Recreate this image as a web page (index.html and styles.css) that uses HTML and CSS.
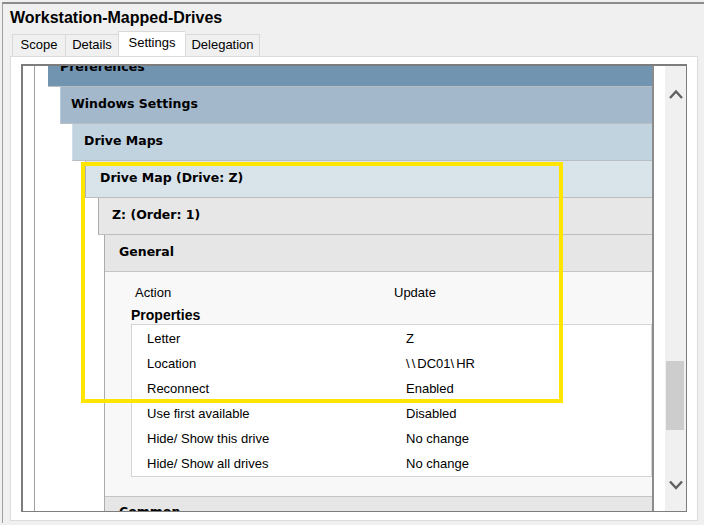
FILE: index.html
```html
<!DOCTYPE html>
<html lang="en">
<head>
   <meta charset="utf-8">
   <title>Workstation-Mapped-Drives</title>
   <link rel="stylesheet" href="styles.css">
</head>
<body>
   <div class="window">
      <div class="title">Workstation-Mapped-Drives</div>
      <div class="tabs">
         <div class="tab w-scope">Scope</div>
         <div class="tab w-details">Details</div>
         <div class="tab active w-settings">Settings</div>
         <div class="tab last w-deleg">Delegation</div>
      </div>
      <div class="panel">
         <div class="frame">
            <div class="view">
               <div class="report">
                  <div class="sec l1">
                     <div class="head">Preferences</div>
                     <div class="body">
                        <div class="sec l2">
                           <div class="head">Windows Settings</div>
                           <div class="body">
                              <div class="sec l3">
                                 <div class="head">Drive Maps</div>
                                 <div class="body">
                                    <div class="sec l4">
                                       <div class="head">Drive Map (Drive: Z)</div>
                                       <div class="body">
                                          <div class="sec l5">
                                             <div class="head">Z: (Order: 1)</div>
                                             <div class="body">
                                                <div class="sec l6">
                                                   <div class="head">General</div>
                                                   <div class="body">
                                                      <div class="action">
                                                         <span>Action</span><span>Update</span>
                                                      </div>
                                                      <div class="props-title">Properties</div>
                                                      <div class="props">
                                                         <div class="row"><span>Letter</span><span>Z</span></div>
                                                         <div class="row"><span>Location</span><span><span class="bs">\</span><span class="bs">\</span>DC01<span class="bs">\</span>HR</span></div>
                                                         <div class="row"><span>Reconnect</span><span>Enabled</span></div>
                                                         <div class="row"><span>Use first available</span><span>Disabled</span></div>
                                                         <div class="row"><span>Hide/ Show this drive</span><span>No change</span></div>
                                                         <div class="row"><span>Hide/ Show all drives</span><span>No change</span></div>
                                                      </div>
                                                   </div>
                                                </div>
                                                <div class="sec l6 common">
                                                   <div class="head">Common</div>
                                                   <div class="body"></div>
                                                </div>
                                             </div>
                                          </div>
                                       </div>
                                    </div>
                                 </div>
                              </div>
                           </div>
                        </div>
                     </div>
                  </div>
               </div>
            </div>
            <div class="scrollbar">
               <div class="sb-btn up">
                  <svg width="16" height="12" viewBox="0 0 16 12"><polyline points="2,10 8,3.5 14,10" fill="none" stroke="#606060" stroke-width="2.4"/></svg>
               </div>
               <div class="sb-track"><div class="sb-thumb"></div></div>
               <div class="sb-btn down">
                  <svg width="16" height="12" viewBox="0 0 16 12"><polyline points="2,2.5 8,9 14,2.5" fill="none" stroke="#606060" stroke-width="2.4"/></svg>
               </div>
            </div>
         </div>
      </div>
   </div>
   <div class="mark"></div>
</body>
</html>
```

FILE: styles.css
```css
body {
   margin:0;
   background:#f0f0f0;
   font-family:"Liberation Sans", Arial, sans-serif;
   font-size:13px;
   color:#000;
}
.window {
   margin:2px 0 0 2px;
   border-top:2px solid #8c8c8c;
   border-left:1px solid #a0a0a0;
   height:519px;
}
.title {
   height:27px;
   line-height:27px;
   padding-left:7px;
   font-size:16px;
   font-weight:bold;
}

/* tab strip */
.tabs {
   display:flex;
   align-items:flex-end;
   height:25px;
   margin-left:9px;
}
.tab {
   box-sizing:border-box;
   height:22px;
   line-height:20px;
   border:1px solid #d9d9d9;
   border-bottom:0;
   border-right:0;
   text-align:center;
   background:#f0f0f0;
}
.tab.last { border-right:1px solid #d9d9d9; }
.tab.active {
   height:25px;
   line-height:22px;
   background:#fff;
}
.w-scope { width:53px; }
.w-details { width:53px; }
.w-settings { width:67px; }
.w-deleg { width:75px; }

.panel {
   box-sizing:border-box;
   margin-left:7px;
   width:688px;
   height:465px;
   border:1px solid #dcdcdc;
   background:#fff;
   padding:7px 0 0 10px;
}
.frame {
   display:flex;
   box-sizing:border-box;
   width:666px;
   height:448px;
   border-style:solid;
   border-color:#7d7d7d;
   border-width:2px 1px 1px 2px;
}
.view {
   flex:1;
   overflow:hidden;
   background:#fff;
   padding:0 11px;
}
.report {
   margin-top:-16px;
   border-left:1px solid #a0a0a0;
   border-right:2px solid #8c8c8c;
   padding-left:13px;
}

/* nested report sections */
.head {
   height:36px;
   line-height:34px;
   border-bottom:1px solid #b9bec2;
   font-family:"DejaVu Sans", sans-serif;
   font-size:12.5px;
   font-weight:bold;
   white-space:nowrap;
}
.l1 > .head { background:#7194b0; padding-left:12px; }
.l1 > .body { padding-left:12px; }
.l2 > .head { background:#a3b8cb; padding-left:10px; border-left:1px solid #b9c9d7; }
.l2 > .body { padding-left:12px; }
.l3 > .head { background:#c1d3df; padding-left:11px; border-left:1px solid #d2dee7; }
.l3 > .body { padding-left:13px; }
.l4 > .head { background:#d8e3ea; padding-left:14px; border-left:1px solid #a9b0b5; border-bottom-color:#bdbdbd; }
.l4 > .body { padding-left:13px; }
.l5 > .head { background:#e7e7e7; padding-left:13px; border-left:1px solid #ababab; border-bottom-color:#bdbdbd; }
.l5 > .body { padding-left:6px; }
.l6 {
   border-left:1px solid #ababab;
   background:#f8f8f8;
}
.l6 > .head { background:#e6e6e6; padding-left:14px; border-bottom-color:#c4c4c4; }
.l6 > .body { padding:8px 0 19px 0; }
.common > .head {
   border-top:1px solid #c4c4c4;
   line-height:29px;
}

.action {
   display:grid;
   grid-template-columns:259px 1fr;
   height:25px;
   line-height:25px;
   padding-left:30px;
}
.props-title {
   height:19px;
   padding:2px 0 0 26px;
   box-sizing:border-box;
   font-size:14px;
   font-weight:bold;
   line-height:17px;
}
.props {
   margin-left:26px;
   border:1px solid #d4d4d4;
   background:#fff;
   padding-top:1px;
}
.props .row {
   display:grid;
   grid-template-columns:259px 1fr;
   height:25px;
   line-height:25px;
   padding-left:15px;
   white-space:nowrap;
}
.bs { padding-right:2px; }

/* scrollbar */
.scrollbar {
   display:flex;
   flex-direction:column;
   width:21px;
   background:#f0f0f0;
}
.sb-btn {
   display:flex;
   align-items:center;
   justify-content:center;
}
.sb-btn.up { height:55px; }
.sb-btn.down { height:53px; }
.sb-track {
   flex:1;
   padding:240px 2px 0 1px;
}
.sb-thumb {
   height:69px;
   background:#cdcdcd;
}

/* highlight drawn over the screenshot */
.mark {
   position:absolute;
   left:81px;
   top:162px;
   width:482px;
   height:241px;
   box-sizing:border-box;
   border:4px solid #ffe500;
}
```
